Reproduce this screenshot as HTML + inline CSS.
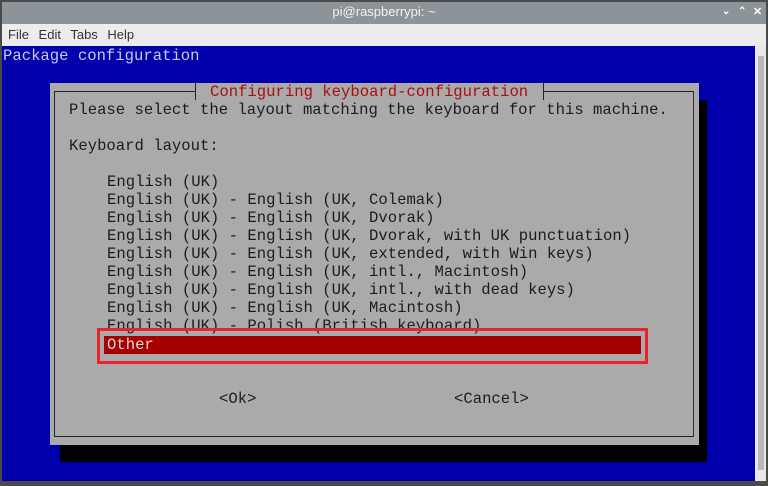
<!DOCTYPE html>
<html><head><style>
*{margin:0;padding:0;box-sizing:border-box}
body{width:768px;height:486px;background:#4a4a4a;position:relative;overflow:hidden;font-family:"Liberation Mono",monospace}
.abs{position:absolute}
.t{position:absolute;font-family:"Liberation Mono",monospace;font-size:15.6px;line-height:18px;white-space:pre;color:#1c1c1c}
</style></head><body>
<div class="abs" style="left:2px;top:2px;width:764px;height:22px;background:#8d9499"></div>
<div class="abs" style="left:0;top:4px;width:768px;text-align:center;font:13px 'Liberation Sans',sans-serif;color:#f2f2f2">pi@raspberrypi: ~</div>
<div class="abs" style="left:722px;top:6px;font:bold 10px 'Liberation Sans',sans-serif;color:#fff">⌄</div>
<div class="abs" style="left:738px;top:6px;font:bold 10px 'Liberation Sans',sans-serif;color:#fff">⌃</div>
<div class="abs" style="left:753px;top:5px;font:bold 11px 'Liberation Sans',sans-serif;color:#fff">✕</div>
<div class="abs" style="left:2px;top:24px;width:764px;height:22px;background:#ececec"></div>
<div class="abs" style="left:8px;top:27px;font:13px 'Liberation Sans',sans-serif;color:#333;word-spacing:6px">File Edit Tabs Help</div>
<div class="abs" style="left:2px;top:46px;width:753px;height:435px;background:#0000aa"></div>
<div class="abs" style="left:755px;top:46px;width:11px;height:435px;background:#e8e8e8"></div>
<div class="abs" style="left:758px;top:56px;width:6px;height:414px;background:#b8b8b8"></div>
<div class="t" style="left:3px;top:47px;color:#c8c8e8">Package configuration</div>
<div class="abs" style="left:60px;top:100px;width:647px;height:362px;background:#000"></div>
<div class="abs" style="left:50px;top:83px;width:649px;height:362px;background:#aaa"></div>
<div class="abs" style="left:54px;top:91px;width:640px;height:346px;border:1px solid #222;border-right-color:#333"></div>
<div class="abs" style="left:195px;top:83px;width:349px;height:17px;background:#aaa;border-left:1px solid #222;border-right:1px solid #222"></div>
<div class="t" style="left:210px;top:83px;color:#a81010">Configuring keyboard-configuration</div>
<div class="t" style="left:69px;top:101px">Please select the layout matching the keyboard for this machine.</div>
<div class="t" style="left:69px;top:137px">Keyboard layout:</div>
<div class="t" style="left:107px;top:173px">English (UK)
English (UK) - English (UK, Colemak)
English (UK) - English (UK, Dvorak)
English (UK) - English (UK, Dvorak, with UK punctuation)
English (UK) - English (UK, extended, with Win keys)
English (UK) - English (UK, intl., Macintosh)
English (UK) - English (UK, intl., with dead keys)
English (UK) - English (UK, Macintosh)
English (UK) - Polish (British keyboard)</div>
<div class="abs" style="left:104px;top:336px;width:537px;height:18px;background:#a80000"></div>
<div class="t" style="left:107px;top:336px;color:#d8d8d8">Other</div>
<div class="abs" style="left:97px;top:328px;width:551px;height:36px;border:3px solid #e8232b"></div>
<div class="t" style="left:219px;top:390px">&lt;Ok&gt;</div>
<div class="t" style="left:454px;top:390px">&lt;Cancel&gt;</div>
</body></html>
